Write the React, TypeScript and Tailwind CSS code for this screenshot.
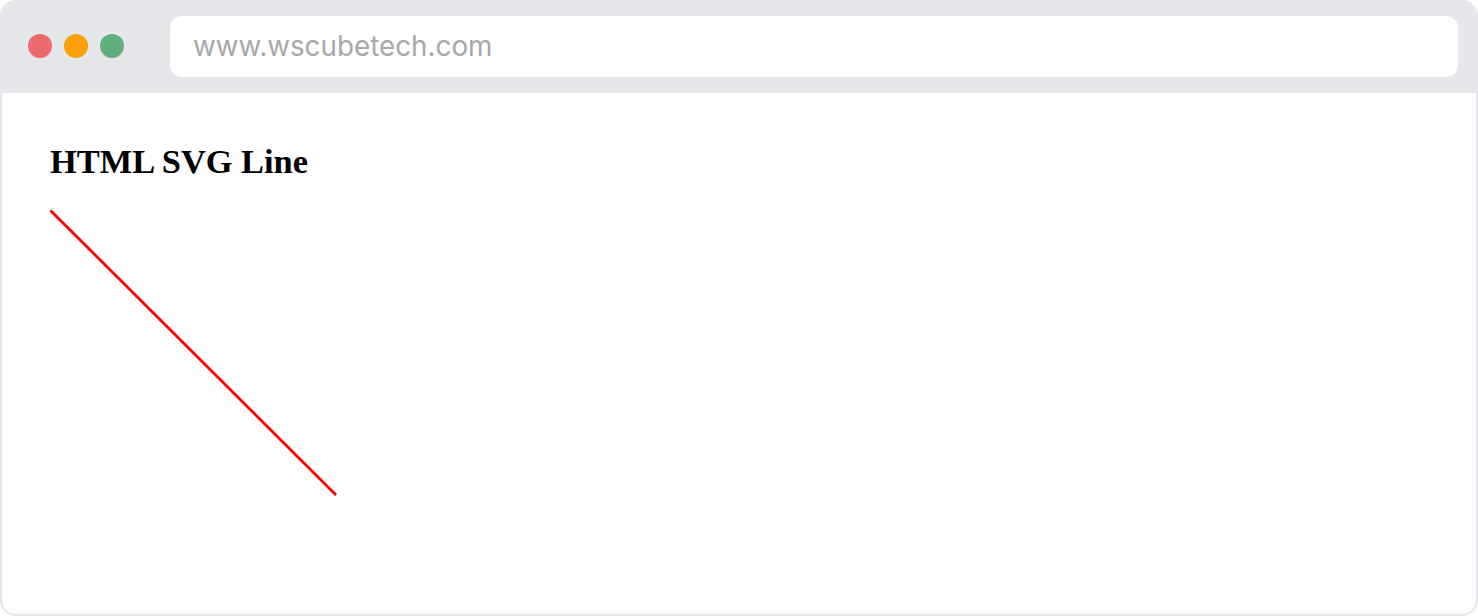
import React from "react";

const App = () => {
  return (
    <div className="h-[616px] w-[1478px] bg-white">
      <div className="flex h-full flex-col overflow-hidden rounded-[16px] border-2 border-[#e5e7eb]">
        <div className="flex h-[91px] shrink-0 items-start bg-[#e5e7eb] pl-[26px] pr-[18px] pt-[14px]">
          <div className="mt-[18px] flex gap-[12px]">
            <span className="h-[24px] w-[24px] rounded-full bg-[#ec6a6a]" />
            <span className="h-[24px] w-[24px] rounded-full bg-[#fb9f0b]" />
            <span className="h-[24px] w-[24px] rounded-full bg-[#62ae7b]" />
          </div>
          <div className="ml-[46px] flex h-[61px] flex-1 items-center rounded-[12px] bg-white pl-[23px]">
            <span className="font-['Inter',sans-serif] text-[27.8px] text-[#a8a8a8]">www.wscubetech.com</span>
          </div>
        </div>
        <div className="flex flex-col pl-[48px] pt-[51px]">
          <h2 className="font-['Liberation_Serif',serif] text-[34.4px] font-bold leading-none text-black">HTML SVG Line</h2>
          <svg className="mt-[32px]" width="290" height="290" viewBox="0 0 290 290">
            <line x1="0" y1="0" x2="286" y2="285" stroke="#ff0000" strokeWidth="2.8" />
          </svg>
        </div>
      </div>
    </div>
  );
};

export default App;
